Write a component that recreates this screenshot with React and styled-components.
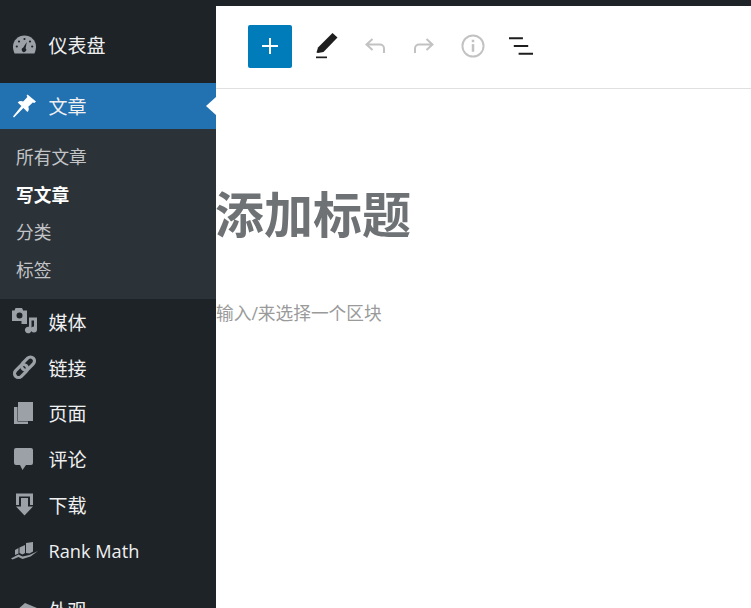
import styled, { createGlobalStyle } from 'styled-components';

const GlobalStyle = createGlobalStyle`
    html, body {
        margin: 0;
        height: 100%;
        overflow: hidden;
        background: #fff;
    }
    body {
        font-family: "Open Sans", "Noto Sans CJK SC", sans-serif;
    }
`;

const cjk = `"Open Sans", "Noto Sans CJK SC", sans-serif`;

const Wrapper = styled.div`
    width: 100%;
    height: 100vh;
    display: flex;
    flex-direction: column;
    overflow: hidden;
`;

const TopStrip = styled.div`
    height: 6px;
    flex: none;
    background: #1d2327;
`;

const Columns = styled.div`
    flex: 1;
    display: flex;
    min-height: 0;
`;

const Sidebar = styled.nav`
    width: 216px;
    flex: none;
    background: #1d2327;
    padding-top: 16px;
`;

const MenuRow = styled.div`
    position: relative;
    height: 45.75px;
    display: flex;
    align-items: center;
    gap: 11.500px;
    padding-left: 12px;
    margin-bottom: ${p => p.$gapAfter || 0}px;
    background: ${p => (p.$active ? '#2271b1' : 'transparent')};
    color: #f0f0f1;
    font-size: ${p => (p.$latin ? '18.200px' : '19px')};
    font-family: ${cjk};
`;

const IconSlot = styled.span`
    width: 25px;
    height: 25px;
    flex: none;
    display: flex;
    color: ${p => (p.$active ? '#fff' : '#9ca1a7')};
    svg {
        width: 100%;
        height: 100%;
        fill: currentColor;
        overflow: visible;
    }
`;

const ActiveNotch = styled.span`
    position: absolute;
    right: 0;
    top: 50%;
    margin-top: -9px;
    border: 9px solid transparent;
    border-left-width: 0;
    border-right-width: 10px;
    border-right-color: #fff;
`;

const SubMenu = styled.div`
    height: 170.250px;
    box-sizing: border-box;
    padding-top: 10.500px;
    background: #2c3338;
`;

const SubItem = styled.div`
    height: 37.500px;
    line-height: 37.500px;
    padding-left: 16px;
    font-size: 17.700px;
    font-family: ${cjk};
    color: ${p => (p.$current ? '#fff' : '#c3c4c7')};
    font-weight: ${p => (p.$current ? 700 : 400)};
`;

const Main = styled.main`
    flex: 1;
    min-width: 0;
    background: #fff;
`;

const Toolbar = styled.div`
    height: 83px;
    box-sizing: border-box;
    border-bottom: 1px solid #e0e0e0;
    display: flex;
    align-items: center;
    padding: 0 0 2px 32px;
`;

const AddButton = styled.button`
    width: 44px;
    height: 43px;
    padding: 0;
    border: none;
    border-radius: 2px;
    background: #007cba;
    color: #fff;
    display: flex;
    align-items: center;
    justify-content: center;
`;

const ToolIcon = styled.span`
    width: 24px;
    height: ${p => p.$tall || 24}px;
    flex: none;
    margin-left: ${p => p.$left}px;
    color: ${p => (p.$disabled ? '#c2c2c2' : '#1e1e1e')};
    svg {
        display: block;
        width: 100%;
        height: 100%;
    }
`;

const EditorBody = styled.div`
    padding-top: 91px;
`;

const TitleText = styled.h1`
    margin: 0 0 0 -1px;
    height: 68px;
    line-height: 68px;
    font-size: 49px;
    font-weight: 700;
    font-family: ${cjk};
    color: #6f7274;
    white-space: nowrap;
`;

const BlockHint = styled.p`
    margin: 52px 0 0;
    line-height: 26px;
    font-size: 17.700px;
    font-family: ${cjk};
    color: #9a9a9a;
    white-space: nowrap;
`;

const GaugeIcon = () => (
    <svg viewBox="0 0 25 25">
        <path d="M12.500 3.500C6.400 3.500 1 8.400 1 14.500c0 2.500.5 4.800 1.600 7h19.800c1.100-2.200 1.600-4.500 1.600-7 0-6.100-5.400-11-11.500-11z" />
        <circle cx="12.500" cy="7" r="1.100" fill="#1d2327" />
        <circle cx="7" cy="9.500" r="1.100" fill="#1d2327" />
        <circle cx="18" cy="9.500" r="1.100" fill="#1d2327" />
        <circle cx="4.800" cy="14.500" r="1.100" fill="#1d2327" />
        <circle cx="20.200" cy="14.500" r="1.100" fill="#1d2327" />
        <path d="M14.800 10l-1.200 6.300a2.200 2.200 0 1 1-2.500-.5z" fill="#1d2327" />
    </svg>
);

const PinIcon = () => (
    <svg viewBox="0 0 25 25">
        <path d="M15.500 1.500l8.500 7-1.600 1.600-1.600-.7-4.500 4.300c.9 2 .6 4-.9 5.400l-4-4-9.400 9.400-1-.9 8.400-10.500-3.700-3.700c1.500-1.500 3.500-1.800 5.500-.9l4.200-4.600-.8-1.500z" />
    </svg>
);

const MediaIcon = () => (
    <svg viewBox="0 0 25 25">
        <path fillRule="evenodd" d="M3.500-1h6.500l1.200 2.500h3.800V15H9.500v-3H0V1.500h2.500zM7.500 3.500a3 3 0 1 0 0 6 3 3 0 0 0 0-6z" />
        <path d="M17 8.500h8v12a3 3 0 1 1-3-3V11.500h-2.500v9.500a3.300 3.300 0 1 1-2.500-3.200z" />
    </svg>
);

const LinkIcon = () => (
    <svg viewBox="0 0 25 25">
        <g fill="none" stroke="currentColor" strokeWidth="3.200">
            <rect x="12" y="1" width="8" height="15" rx="4" transform="rotate(45 16 8.500)" />
            <rect x="5" y="8.500" width="8" height="15" rx="4" transform="rotate(45 9 16)" />
        </g>
    </svg>
);

const PagesIcon = () => (
    <svg viewBox="0 0 25 25">
        <path d="M2 6h3.500v14.500H16V23H2z" />
        <path d="M6 1h15v19H6z" />
    </svg>
);

const CommentIcon = () => (
    <svg viewBox="0 0 25 25">
        <path d="M4 1h15a2 2 0 0 1 2 2v13a2 2 0 0 1-2 2h-5l-3.500 5L8 18H4a2 2 0 0 1-2-2V3a2 2 0 0 1 2-2z" />
    </svg>
);

const DownloadIcon = () => (
    <svg viewBox="0 0 25 25">
        <path d="M4 1.500h17V13h-3V4.500H7V13H4z" />
        <path d="M9 6h7v8.500h5l-8.500 9-8.500-9h5z" />
    </svg>
);

const RankMathIcon = () => (
    <svg viewBox="0 0 25 25">
        <path d="M3 12l3.500-2v5.500L3 17zM7.500 9.500l5.500-2.500v8l-2.500 1.500-3-1.500zM14 5l7-1v9.500l-3.500 2-3.500-.5z" />
        <path d="M-1 20.500l7.500-4 4 2 7-1.500L26 13l-7.500 5.500-8 2.500-4-2-6 2.500z" />
    </svg>
);

const BrushRoller = () => (
    <svg viewBox="0 0 25 25">
        <path d="M5 12l8-7 12 5 1 4-8 5-7-1z" />
    </svg>
);

const BrushIcon = () => (
    <svg viewBox="0 0 24 28" fill="currentColor">
        <path d="M18.500 1l5 4.500L9.500 20l-5.500 1-1.500-.5 1.500-5z" />
        <rect x="2" y="24.500" width="11" height="1.700" />
    </svg>
);

const UndoIcon = () => (
    <svg viewBox="0 0 24 24" fill="none" stroke="currentColor" strokeWidth="2">
        <path d="M9.500 5L3.500 10.500l6 5.500M3.500 10.500h13.500a4 4 0 0 1 4 4V19" />
    </svg>
);

const RedoIcon = () => (
    <svg viewBox="0 0 24 24" fill="none" stroke="currentColor" strokeWidth="2">
        <path d="M14.500 5l6 5.500-6 5.500M20.500 10.500H7a4 4 0 0 0-4 4V19" />
    </svg>
);

const InfoIcon = () => (
    <svg viewBox="0 0 25 25" fill="none" stroke="currentColor" strokeWidth="2">
        <circle cx="12.500" cy="12.500" r="11" />
        <path d="M12.500 10.500v8" strokeWidth="2.600" />
        <path d="M12.500 6v2.600" strokeWidth="2.600" />
    </svg>
);

const OutlineIcon = () => (
    <svg viewBox="0 0 25 24" fill="none" stroke="currentColor" strokeWidth="2">
        <path d="M0 4h14.500M5 12h15M10 20h15" />
    </svg>
);

const App = () => {
    return (
        <Wrapper>
            <GlobalStyle />
            <TopStrip />
            <Columns>
                <Sidebar>
                    <MenuRow $gapAfter={15.250}>
                        <IconSlot><GaugeIcon /></IconSlot>仪表盘
                    </MenuRow>
                    <MenuRow $active>
                        <IconSlot $active><PinIcon /></IconSlot>文章
                        <ActiveNotch />
                    </MenuRow>
                    <SubMenu>
                        <SubItem>所有文章</SubItem>
                        <SubItem $current>写文章</SubItem>
                        <SubItem>分类</SubItem>
                        <SubItem>标签</SubItem>
                    </SubMenu>
                    <MenuRow><IconSlot><MediaIcon /></IconSlot>媒体</MenuRow>
                    <MenuRow><IconSlot><LinkIcon /></IconSlot>链接</MenuRow>
                    <MenuRow><IconSlot><PagesIcon /></IconSlot>页面</MenuRow>
                    <MenuRow><IconSlot><CommentIcon /></IconSlot>评论</MenuRow>
                    <MenuRow><IconSlot><DownloadIcon /></IconSlot>下载</MenuRow>
                    <MenuRow $latin $gapAfter={14}><IconSlot><RankMathIcon /></IconSlot>Rank Math</MenuRow>
                    <MenuRow><IconSlot><BrushRoller /></IconSlot>外观</MenuRow>
                </Sidebar>
                <Main>
                    <Toolbar>
                        <AddButton aria-label="add">
                            <svg width="24" height="24" viewBox="0 0 24 24" fill="none" stroke="#fff" strokeWidth="2">
                                <path d="M12 4v16M4 12h16" />
                            </svg>
                        </AddButton>
                        <ToolIcon $left={22} $tall={28}><BrushIcon /></ToolIcon>
                        <ToolIcon $left={25} $disabled><UndoIcon /></ToolIcon>
                        <ToolIcon $left={25} $disabled><RedoIcon /></ToolIcon>
                        <ToolIcon $left={25} $disabled><InfoIcon /></ToolIcon>
                        <ToolIcon $left={24}><OutlineIcon /></ToolIcon>
                    </Toolbar>
                    <EditorBody>
                        <TitleText>添加标题</TitleText>
                        <BlockHint>输入/来选择一个区块</BlockHint>
                    </EditorBody>
                </Main>
            </Columns>
        </Wrapper>
    );
};

export default App;
